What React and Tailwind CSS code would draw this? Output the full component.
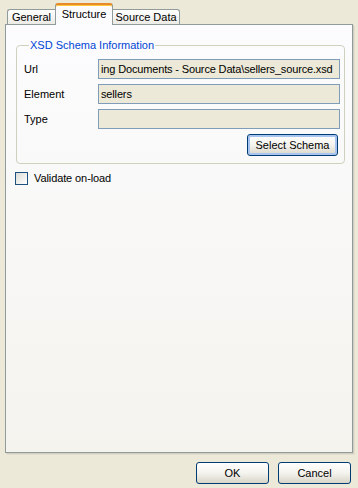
import React from 'react';

const xpButton =
    "h-[22px] rounded-[3px] border border-[#003C74] bg-linear-to-b from-white via-[#F4F3EE] to-[#D8D5C8] text-black flex items-center justify-center";

const Field = ({ label, value }) => (
    <div className="flex items-center h-[20px]">
        <span className="w-[74px] shrink-0">{label}</span>
        <div className="flex-1 h-[20px] border border-[#7F9DB9] bg-[#ECE9D8] px-[2px] flex items-center overflow-hidden whitespace-nowrap tracking-[-0.15px]">
            {value}
        </div>
    </div>
);

const App = () => {
    return (
        <div className="w-[358px] h-[488px] bg-[#ECE9D8] flex flex-col px-[5px] pt-[3px] text-[11px] leading-[13px] text-black font-['Liberation_Sans',Arial,sans-serif]">
            {/* tabs */}
            <div className="flex items-end h-[21px] pl-[2px] relative z-10">
                <div className="w-[48px] h-[15px] border-t border-l border-[#919B9C] rounded-tl-[3px] bg-linear-to-b from-white to-[#ECEBE6] flex items-center justify-center">
                    General
                </div>
                <div className="w-[58px] h-[22px] -mb-px border-x border-[#919B9C] border-t-2 border-t-[#E68B2C] rounded-t-[3px] bg-[#FCFCFE] shadow-[inset_0_1px_0_#FFC73C] flex items-start justify-center pt-[3px]">
                    Structure
                </div>
                <div className="w-[67px] h-[15px] border-t border-r border-[#919B9C] rounded-tr-[3px] bg-linear-to-b from-white to-[#ECEBE6] flex items-center justify-center">
                    Source Data
                </div>
            </div>

            {/* tab page */}
            <div className="h-[429px] border border-[#919B9C] bg-linear-to-b from-[#FCFCFE] to-[#F4F3EE] shadow-[1px_1px_0_#D0CEBF,2px_2px_0_#E3E0D0] pl-[10px] pr-[7px] pt-[14px]">
                <fieldset className="border border-[#D0D0BF] rounded-[4px] pl-[7px] pr-[4px] pb-[7px] flex flex-col">
                    <legend className="ml-[5px] px-[1px] text-[#0046D5]">XSD Schema Information</legend>
                    <div className="flex flex-col gap-[5px] mt-[7px]">
                        <Field label="Url" value="ing Documents - Source Data\sellers_source.xsd" />
                        <Field label="Element" value="sellers" />
                        <Field label="Type" value="" />
                    </div>
                    <button className={`${xpButton} self-end mr-[2px] mt-[5px] w-[91px] h-[21px] shadow-[inset_0_0_0_2px_#A8C4F0]`}>
                        Select Schema
                    </button>
                </fieldset>

                <label className="flex items-center gap-[6px] mt-[8px] -ml-px">
                    <span className="w-[13px] h-[13px] border border-[#1C5180] bg-linear-to-br from-[#DCDCD7] to-white" />
                    <span className="tracking-[-0.1px]">Validate on-load</span>
                </label>
            </div>

            {/* dialog buttons */}
            <div className="flex justify-end gap-[9px] mt-[9px] mr-[2px]">
                <button className={`${xpButton} w-[73px]`}>OK</button>
                <button className={`${xpButton} w-[73px]`}>Cancel</button>
            </div>
        </div>
    );
};

export default App;
